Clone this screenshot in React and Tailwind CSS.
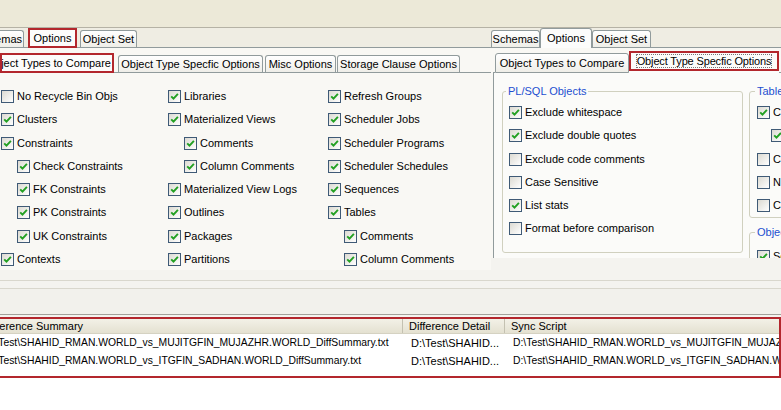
import React from 'react';

const RED = 'border-2 border-[#b3272d]';

function Check({ on }) {
  return (
    <span className="flex h-[13px] w-[13px] shrink-0 items-center justify-center border border-[#3f5a76] bg-linear-to-br from-[#dcdad2] to-white">
      {on && (
        <svg width="9" height="9" viewBox="0 0 9 9">
          <path d="M1.2 4.3 L3.5 6.7 L7.9 1.9" fill="none" stroke="#22a022" strokeWidth="1.9" />
        </svg>
      )}
    </span>
  );
}

function Item({ label, on = true, indent = '' }) {
  return (
    <div className={`flex h-[23.25px] items-center gap-[3px] whitespace-nowrap ${indent}`}>
      <Check on={on} />
      <span>{label}</span>
    </div>
  );
}

function Tab({ children, className = '' }) {
  return (
    <div className={`flex items-center overflow-hidden whitespace-nowrap rounded-t-[3px] border border-[#919b9c] bg-linear-to-b from-white to-[#efeee8] ${className}`}>
      {children}
    </div>
  );
}

const col1 = [
  ['No Recycle Bin Objs', false, ''],
  ['Clusters', true, ''],
  ['Constraints', true, ''],
  ['Check Constraints', true, 'pl-[16px]'],
  ['FK Constraints', true, 'pl-[16px]'],
  ['PK Constraints', true, 'pl-[16px]'],
  ['UK Constraints', true, 'pl-[16px]'],
  ['Contexts', true, ''],
];
const col2 = [
  ['Libraries', true, ''],
  ['Materialized Views', true, ''],
  ['Comments', true, 'pl-[16px]'],
  ['Column Comments', true, 'pl-[16px]'],
  ['Materialized View Logs', true, ''],
  ['Outlines', true, ''],
  ['Packages', true, ''],
  ['Partitions', true, ''],
];
const col3 = [
  ['Refresh Groups', true, ''],
  ['Scheduler Jobs', true, ''],
  ['Scheduler Programs', true, ''],
  ['Scheduler Schedules', true, ''],
  ['Sequences', true, ''],
  ['Tables', true, ''],
  ['Comments', true, 'pl-[16px]'],
  ['Column Comments', true, 'pl-[16px]'],
];

function LeftShot() {
  return (
    <div className="flex h-[270px] w-[491px] shrink-0 flex-col overflow-hidden">
      <div className="h-[28px] shrink-0 border-b border-[#b5b2a5] bg-[#ece9d8]" />
      <div className="flex h-[20px] shrink-0 items-end border-b border-[#919b9c] bg-[#efede3]">
        <Tab className="h-[17px] w-[24px] justify-end rounded-tl-none border-b-0 border-l-0 pr-px">Schemas</Tab>
        <div className={`-mb-px ml-[4px] flex h-[20px] w-[49px] items-center justify-center bg-[#fcfcfb] ${RED}`}>Options</div>
        <Tab className="ml-[3px] h-[17px] w-[57px] justify-center border-b-0">Object Set</Tab>
      </div>
      <div className="min-h-0 flex-1 overflow-hidden bg-[#f9f8f4]">
        <div className="flex h-[25px] items-end border-b border-[#919b9c]">
          <div className={`-mb-px flex h-[20px] w-[114px] items-center justify-end overflow-hidden whitespace-nowrap bg-[#fcfcfb] pr-px ${RED}`}>
            Object Types to Compare
          </div>
          <Tab className="ml-[4px] h-[17px] w-[145px] justify-center border-b-0">Object Type Specfic Options</Tab>
          <Tab className="ml-[2px] h-[17px] w-[71px] justify-center border-b-0">Misc Options</Tab>
          <Tab className="ml-[1px] h-[17px] w-[123px] justify-center border-b-0">Storage Clause Options</Tab>
        </div>
        <div className="flex pl-[1px] pt-[12px]">
          <div className="w-[167px] shrink-0">
            {col1.map(([l, on, ind], i) => <Item key={i} label={l} on={on} indent={ind} />)}
          </div>
          <div className="w-[160px] shrink-0">
            {col2.map(([l, on, ind], i) => <Item key={i} label={l} on={on} indent={ind} />)}
          </div>
          <div className="flex-1">
            {col3.map(([l, on, ind], i) => <Item key={i} label={l} on={on} indent={ind} />)}
          </div>
        </div>
      </div>
    </div>
  );
}

function RightShot() {
  return (
    <div className="flex h-[258px] flex-1 flex-col overflow-hidden">
      <div className="h-[28px] shrink-0 border-b border-[#b5b2a5] bg-[#ece9d8]" />
      <div className="flex h-[20px] shrink-0 items-end border-b border-[#919b9c] bg-[#efede3]">
        <Tab className="h-[17px] w-[49px] justify-center border-b-0">Schemas</Tab>
        <div className="-mb-px flex h-[20px] w-[52px] items-center justify-center rounded-t-[3px] border border-b-0 border-[#919b9c] bg-[#fcfcfb]">
          Options
        </div>
        <Tab className="h-[17px] w-[59px] justify-center border-b-0">Object Set</Tab>
      </div>
      <div className="flex min-h-0 flex-1 flex-col bg-[#f9f8f4] pl-[2px]">
        <div className="flex h-[25px] shrink-0 items-end">
          <div className="h-full w-[2px] border-b border-[#919b9c]" />
          <Tab className="h-[20px] w-[134px] justify-center">Object Types to Compare</Tab>
          <div className="h-[22px] w-[150px] shrink-0 bg-[#fcfcfb]">
            <div className={`flex h-[20px] items-center justify-center overflow-hidden whitespace-nowrap ${RED}`}>
              <span className="border border-dotted border-[#777] leading-[12px] tracking-[-0.15px]">Object Type Specfic Options</span>
            </div>
          </div>
          <div className="h-full flex-1 border-b border-[#919b9c]" />
        </div>
        <div className="flex min-h-0 flex-1 overflow-hidden border-l border-[#919b9c] bg-[#fbfbf9] pt-[12px]">
          <fieldset className="ml-[8px] h-[168px] w-[241px] min-w-0 shrink-0 rounded-[3px] border border-[#d0d0bf] px-[6px] pt-[3px]">
            <legend className="-ml-[3px] px-[2px] leading-[13px] text-[#1d4fd0]">PL/SQL Objects</legend>
            <Item label="Exclude whitespace" />
            <Item label="Exclude double quotes" />
            <Item label="Exclude code comments" on={false} />
            <Item label="Case Sensitive" on={false} />
            <Item label="List stats" />
            <Item label="Format before comparison" on={false} />
          </fieldset>
          <div className="ml-[6px] flex w-[200px] shrink-0 flex-col">
            <fieldset className="h-[138px] min-w-0 rounded-[3px] border border-[#d0d0bf] px-[7px] pt-[3px]">
              <legend className="-ml-[2px] px-[2px] leading-[13px] text-[#1d4fd0]">Tables</legend>
              <Item label="Comments" />
              <Item label="Column Comments" indent="pl-[14px]" />
              <Item label="Compression" on={false} />
              <Item label="NULL Constraints" on={false} />
              <Item label="Constraint Names" on={false} />
            </fieldset>
            <fieldset className="mt-[8px] h-[60px] min-w-0 rounded-[3px] border border-[#d0d0bf] px-[7px] pt-[6px]">
              <legend className="-ml-[2px] px-[2px] leading-[13px] text-[#1d4fd0]">Objects</legend>
              <Item label="Source" />
            </fieldset>
          </div>
        </div>
      </div>
    </div>
  );
}

function Grid() {
  const rows = [
    ['D:\\Test\\SHAHID_RMAN.WORLD_vs_MUJITGFIN_MUJAZHR.WORLD_DiffSummary.txt', 'D:\\Test\\SHAHID_RMAN.WORLD_vs_MUJITGFIN_MUJAZHR.WORLD_DiffSync.sql'],
    ['D:\\Test\\SHAHID_RMAN.WORLD_vs_ITGFIN_SADHAN.WORLD_DiffSummary.txt', 'D:\\Test\\SHAHID_RMAN.WORLD_vs_ITGFIN_SADHAN.WORLD_DiffSync.sql'],
  ];
  return (
    <div className="flex h-[61px] shrink-0 flex-col overflow-hidden border-y-2 border-r-2 border-[#b3272d] bg-white">
      <div className="flex h-[15px] shrink-0 items-center border-b border-[#d5d2c2] bg-linear-to-b from-[#f3f1e7] to-[#e4e1d1]">
        <div className="flex h-full w-[403px] shrink-0 items-center overflow-hidden whitespace-nowrap border-r border-[#c4c1b1]">
          <div className="-ml-[17px]">Difference Summary</div>
        </div>
        <div className="flex h-full w-[102px] shrink-0 items-center whitespace-nowrap border-r border-[#c4c1b1] pl-[6px]">Difference Detail</div>
        <div className="whitespace-nowrap pl-[6px]">Sync Script</div>
      </div>
      {rows.map(([summary, sync], i) => (
        <div key={i} className="flex h-[18px] shrink-0 items-center whitespace-nowrap">
          <div className="w-[403px] shrink-0 overflow-hidden text-[10.35px]">
            <div className="-ml-[15px]">{summary}</div>
          </div>
          <div className="w-[103px] shrink-0 pl-[8px]">{'D:\\Test\\SHAHID...'}</div>
          <div className="pl-[7px] text-[10.35px]">{sync}</div>
        </div>
      ))}
    </div>
  );
}

export default function App() {
  return (
    <div className="flex h-[410px] w-[781px] flex-col overflow-hidden bg-[#f4f3ef] font-['Liberation_Sans',Arial,sans-serif] text-[11px] leading-none text-black">
      <div className="flex h-[270px] shrink-0 items-start">
        <LeftShot />
        <RightShot />
      </div>
      <div className="h-[10px] shrink-0" />
      <div className="h-[8px] shrink-0 border-t border-[#d9d7cd]" />
      <div className="h-[26px] shrink-0 border-t border-[#d9d7cd] bg-[#f2f1ec]" />
      <div className="h-[3px] shrink-0 border-t border-[#a2a19a]" />
      <Grid />
      <div className="flex-1 bg-white" />
    </div>
  );
}
